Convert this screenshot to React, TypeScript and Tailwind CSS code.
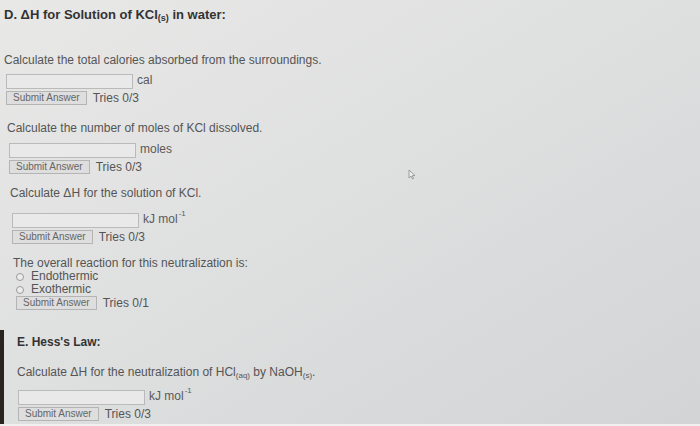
import React from "react";

const font = { fontFamily: '"Liberation Sans", Arial, sans-serif' };

const Answer = ({
  unit,
  tries,
  ml,
  gap = "mt-[2px]",
}: {
  unit: React.ReactNode;
  tries: string;
  ml: string;
  gap?: string;
}) => (
  <div className={ml}>
    <div className="flex items-start">
      <div className="w-[127px] h-[15px] border border-[#bababa] bg-[#e9e9e9]" />
      <span className="ml-[4px] -mt-[1px] text-[12px] leading-[14px] text-[#5a5a5a]">{unit}</span>
    </div>
    <SubmitRow tries={tries} gap={gap} />
  </div>
);

const SubmitRow = ({ tries, gap = "mt-[2px]" }: { tries: string; gap?: string }) => (
  <div className={`${gap} flex items-center`}>
    <button className="h-[14px] px-[6px] border border-[#b4b4b4] bg-[#dedede] text-[10px] leading-[12px] text-[#666]">
      Submit Answer
    </button>
    <span className="ml-[6px] text-[12px] leading-[14px] text-[#555]">{tries}</span>
  </div>
);

const KJ = () => (
  <span className="inline-flex items-start">
    kJ mol<span className="ml-[1px] text-[8px] leading-[8px] -mt-[2px]">-1</span>
  </span>
);

export default function App() {
  return (
    <div
      style={font}
      className="relative w-[700px] h-[426px] overflow-hidden bg-gradient-to-br from-[#e8e8e7] via-[#dedfdf] to-[#d2d4d6]"
    >
      <div className="flex flex-col">
        <h1 className="ml-[4px] mt-[7px] text-[13px] leading-[16px] font-bold text-[#333]">
          D. ΔH for Solution of KCl<sub className="text-[9px]">(s)</sub> in water:
        </h1>

        <p className="ml-[4px] mt-[30px] text-[12px] leading-[14px] text-[#555]">
          Calculate the total calories absorbed from the surroundings.
        </p>
        <div className="mt-[7px]">
          <Answer ml="ml-[6px]" unit="cal" tries="Tries 0/3" />
        </div>

        <p className="ml-[7px] mt-[16px] text-[12px] leading-[14px] text-[#555]">
          Calculate the number of moles of KCl dissolved.
        </p>
        <div className="mt-[8px]">
          <Answer ml="ml-[9px]" unit="moles" tries="Tries 0/3" />
        </div>

        <p className="ml-[10px] mt-[12px] text-[12px] leading-[14px] text-[#555]">
          Calculate ΔH for the solution of KCl.
        </p>
        <div className="mt-[13px]">
          <Answer ml="ml-[12px]" unit={<KJ />} tries="Tries 0/3" />
        </div>

        <p className="ml-[13px] mt-[12px] text-[12px] leading-[14px] text-[#555]">
          The overall reaction for this neutralization is:
        </p>
        <div className="ml-[16px] flex flex-col text-[12px] leading-[13px] text-[#555]">
          <label className="flex items-center">
            <span className="w-[8px] h-[8px] rounded-full border border-[#9a9a9a] bg-[#ececec]" />
            <span className="ml-[7px]">Endothermic</span>
          </label>
          <label className="flex items-center">
            <span className="w-[8px] h-[8px] rounded-full border border-[#9a9a9a] bg-[#ececec]" />
            <span className="ml-[7px]">Exothermic</span>
          </label>
        </div>
        <div className="ml-[16px] -mt-[2px]">
          <SubmitRow tries="Tries 0/1" />
        </div>

        <h2 className="ml-[17px] mt-[25px] text-[12px] leading-[14px] font-bold text-[#333]">E. Hess's Law:</h2>

        <p className="ml-[17px] mt-[16px] text-[12px] leading-[14px] text-[#555]">
          Calculate ΔH for the neutralization of HCl<sub className="text-[8px]">(aq)</sub> by NaOH
          <sub className="text-[8px]">(s)</sub>.
        </p>
        <div className="mt-[11px]">
          <Answer ml="ml-[18px]" unit={<KJ />} tries="Tries 0/3" />
        </div>
      </div>

      {/* mouse pointer */}
      <svg className="absolute left-[408px] top-[169px]" width="8" height="11" viewBox="0 0 8 11">
        <path d="M1 1 L1 9 L3 7 L4.5 10 L5.5 9.5 L4.3 6.6 L7 6.6 Z" fill="#eeeeee" stroke="#8a8a8a" strokeWidth="0.8" />
      </svg>

      <div className="absolute left-0 top-[330px] w-[4px] h-[96px] bg-[#2a2421]" />
      <div className="absolute left-0 bottom-0 w-full h-[2px] bg-[#f0f0f0]" />
    </div>
  );
}
